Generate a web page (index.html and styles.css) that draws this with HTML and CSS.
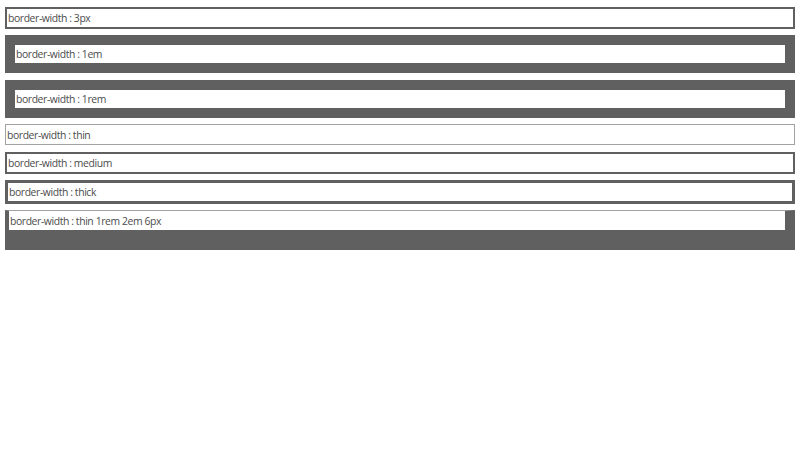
FILE: index.html
```html
<!DOCTYPE html>
<html>
<head>
<meta charset="utf-8">
<link rel="stylesheet" href="styles.css">
</head>
<body>
<div class="list">
  <div class="box b-3px">border-width : 3px</div>
  <div class="box b-em">border-width : 1em</div>
  <div class="box b-rem">border-width : 1rem</div>
  <div class="box b-thin">border-width : thin</div>
  <div class="box b-medium">border-width : medium</div>
  <div class="box b-thick">border-width : thick</div>
  <div class="box b-mixed">border-width : thin 1rem 2em 6px</div>
</div>
</body>
</html>
```
FILE: styles.css
```css
html, body {
  margin: 0;
  padding: 0;
  background: #ffffff;
}
body {
  padding: 7px 5px 0 5px;
  font-family: "Open Sans", "Noto Sans", sans-serif;
  font-size: 10.4px;
  letter-spacing: -0.4px;
  color: #4c4c4c;
}
.list {
  display: flex;
  flex-direction: column;
  gap: 6.4px;
}
.box {
  border-style: solid;
  border-color: #606060;
  line-height: 18px;
  padding: 0 1px;
  background: #fff;
}
.b-3px { border-width: 2px; }
.b-em { border-width: 10px; }
.b-rem { border-width: 10px; }
.b-thin { border-width: 1px; border-color: #a2a2a2; padding-top: 1px; }
.b-medium { border-width: 2px; }
.b-thick { border-width: 3px; }
.b-mixed {
  border-width: 1px 10px 20px 4px;
  border-top-color: #a2a2a2;
  padding-top: 1px;
}
```
